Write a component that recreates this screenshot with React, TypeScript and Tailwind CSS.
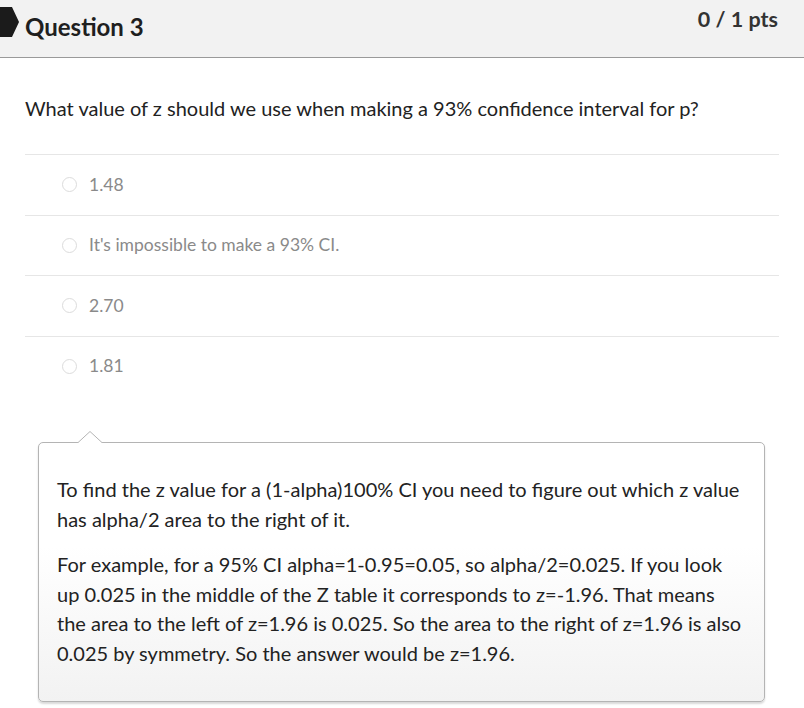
export default function App() {
  const answers = ["1.48", "It's impossible to make a 93% CI.", "2.70", "1.81"];
  return (
    <div className="w-[804px] h-[708px] bg-white overflow-hidden font-['Lato',sans-serif] text-[#2d3b45]">
      <div className="relative h-[58px] bg-[#f2f2f2] border-b border-[#9a9a9a] flex items-center justify-between pl-[25px] pr-[26px]">
        <svg className="absolute left-0 top-[7px]" width="20" height="30" viewBox="0 0 20 30">
          <polygon points="-6,0 12,0 19,15 12,30 -6,30" fill="#1b1b1b" />
        </svg>
        <h2 className="text-[24px] font-bold text-[#1f1f1f] mt-[-4px]">Question 3</h2>
        <span className="text-[21.5px] font-bold text-[#333] mt-[-18px]">0 / 1 pts</span>
      </div>

      <p className="px-[25px] pt-[35px] text-[20px] leading-[30px] text-[#222]">
        What value of z should we use when making a 93% confidence interval for p?
      </p>

      <div className="mx-[25px] mt-[31px]">
        {answers.map((a) => (
          <div key={a} className="h-[60.5px] border-t border-[#e6e6e6] flex items-center pl-[37px] gap-[12px]">
            <span className="w-[15px] h-[15px] rounded-full border border-[#dcdcdc] bg-white" />
            <span className="text-[17.5px] text-[#8a8a8a]">{a}</span>
          </div>
        ))}
      </div>

      <div className="relative ml-[38px] w-[727px] mt-[46px] h-[260px] rounded-[5px] border border-[#b4b4b4] bg-gradient-to-b from-white from-40% to-[#f2f2f2] shadow-[0_2px_2px_rgba(0,0,0,0.15)] px-[18px] pt-[32px] text-[20px] leading-[29.5px] text-[#222]">
        <svg className="absolute left-[38px] top-[-12px]" width="26" height="13" viewBox="0 0 26 13">
          <polygon points="0,12.5 13,0.5 26,12.5" fill="white" stroke="#b4b4b4" />
          <rect x="0" y="12" width="26" height="2" fill="white" />
        </svg>
        <p>
          To find the z value for a (1-alpha)100% CI you need to figure out which z value has alpha/2 area to the right of it.
        </p>
        <p className="mt-[16px]">
          For example, for a 95% CI alpha=1-0.95=0.05, so alpha/2=0.025. If you look up 0.025 in the middle of the Z table it corresponds to z=-1.96. That means the area to the left of z=1.96 is 0.025. So the area to the right of z=1.96 is also 0.025 by symmetry. So the answer would be z=1.96.
        </p>
      </div>
    </div>
  );
}
